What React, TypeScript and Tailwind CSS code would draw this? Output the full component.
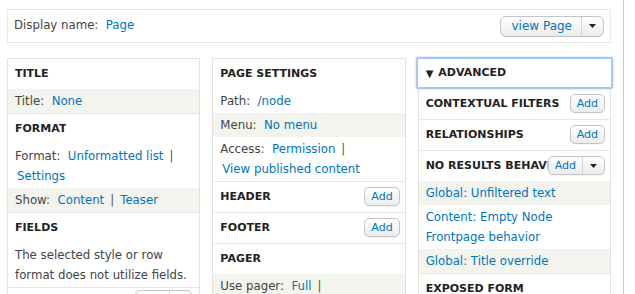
import type { ReactNode } from "react";

const font = { fontFamily: '"DejaVu Sans", Verdana, sans-serif' };

function Caret() {
  return (
    <svg width="7" height="4" viewBox="0 0 7 4" className="fill-[#222]">
      <path d="M0 0h7L3.5 4z" />
    </svg>
  );
}

function AddButton({ split }: { split?: boolean }) {
  return (
    <div className="flex h-[19px] items-stretch rounded-[5px] border border-[#c4c4c4] bg-gradient-to-b from-white to-[#ececec] text-[11px] leading-[17px] text-[#0074bd] shadow-[0_1px_0_rgba(0,0,0,0.04)]">
      <span className="px-[6px]">Add</span>
      {split && (
        <span className="flex w-[22px] items-center justify-center border-l border-[#d4d4d4]">
          <Caret />
        </span>
      )}
    </div>
  );
}

function Section({
  title,
  action,
  children,
  last,
}: {
  title: string;
  action?: ReactNode;
  children?: ReactNode;
  last?: boolean;
}) {
  return (
    <div className={last ? "" : "border-b border-[#e6e6e3]"}>
      <div className="relative flex h-[30px] items-center justify-between px-[7px]">
        <h3 className="overflow-hidden whitespace-nowrap text-[11px] font-bold uppercase text-[#222]">
          {title}
        </h3>
        {action && <div className="absolute right-[5px] top-[5px]">{action}</div>}
      </div>
      {children}
    </div>
  );
}

function Row({ gray, children }: { gray?: boolean; children: ReactNode }) {
  return (
    <div className={`px-[7px] py-[2px] leading-[20px] ${gray ? "bg-[#f3f4ee]" : ""}`}>
      {children}
    </div>
  );
}

const A = ({ children }: { children: ReactNode }) => (
  <span className="text-[#0074bd]">{children}</span>
);
const Sep = () => <span className="px-[6px] text-[#555]">|</span>;

export default function App() {
  return (
    <div
      style={font}
      className="h-[294px] w-[635px] overflow-hidden bg-white text-[11.75px] text-[#444]"
    >
      <div className="h-full w-[624px] border-r border-[#c9c9c9] pl-[7px] pr-[12px] pt-[9px]">
        {/* display name bar */}
        <div className="flex h-[34px] items-center justify-between border border-[#e8e8e8] px-[6px]">
          <div>
            Display name:&nbsp; <A>Page</A>
          </div>
          <div className="flex h-[21px] items-stretch rounded-[6px] border border-[#c4c4c4] bg-gradient-to-b from-white to-[#ebebeb] text-[12px] leading-[19px] text-[#0074bd]">
            <span className="pl-[11px] pr-[9px]">view Page</span>
            <span className="flex w-[22px] items-center justify-center border-l border-[#d4d4d4]">
              <Caret />
            </span>
          </div>
        </div>

        <div className="mt-[15px] grid grid-cols-3 gap-[12px]">
          {/* column 1 */}
          <div className="border border-[#e1e1de]">
            <Section title="Title">
              <Row gray>
                Title:&nbsp; <A>None</A>
              </Row>
            </Section>
            <Section title="Format">
              <Row>
                <div>
                  Format:&nbsp; <A>Unformatted list</A>
                  <Sep />
                </div>
                <div className="pl-[2px]">
                  <A>Settings</A>
                </div>
              </Row>
              <Row gray>
                Show:&nbsp; <A>Content</A>
                <Sep />
                <A>Teaser</A>
              </Row>
            </Section>
            <Section title="Fields">
              <Row>
                <div>The selected style or row</div>
                <div>format does not utilize fields.</div>
              </Row>
            </Section>
            <div className="flex justify-end px-[7px] pt-[2px]">
              <AddButton split />
            </div>
          </div>

          {/* column 2 */}
          <div className="border border-[#e1e1de]">
            <Section title="Page settings">
              <Row>
                Path:&nbsp; <A>/node</A>
              </Row>
              <Row gray>
                Menu:&nbsp; <A>No menu</A>
              </Row>
              <Row>
                <div>
                  Access:&nbsp; <A>Permission</A>
                  <Sep />
                </div>
                <div className="pl-[2px]">
                  <A>View published content</A>
                </div>
              </Row>
            </Section>
            <Section title="Header" action={<AddButton />} />
            <Section title="Footer" action={<AddButton />} />
            <Section title="Pager" last>
              <Row gray>
                Use pager:&nbsp; <A>Full</A>
                <Sep />
              </Row>
            </Section>
          </div>

          {/* column 3 */}
          <div className="-mt-[1px]">
            <div className="-mx-[2px] flex h-[32px] items-center gap-[5px] rounded-[2px] border-2 border-[#a9c8ec] px-[8px] text-[11px] font-bold uppercase text-[#222] shadow-[0_0_2px_rgba(90,150,220,0.6)]">
              <span className="text-[10px]">▼</span>
              Advanced
            </div>
            <div className="border border-t-0 border-[#e1e1de]">
              <Section title="Contextual filters" action={<AddButton />} />
              <Section title="Relationships" action={<AddButton />} />
              <Section title="No results behavior" action={<AddButton split />}>
                <Row gray>
                  <A>Global: Unfiltered text</A>
                </Row>
                <Row>
                  <div>
                    <A>Content: Empty Node</A>
                  </div>
                  <div>
                    <A>Frontpage behavior</A>
                  </div>
                </Row>
                <Row gray>
                  <A>Global: Title override</A>
                </Row>
              </Section>
              <Section title="Exposed form" last />
            </div>
          </div>
        </div>
      </div>
    </div>
  );
}
